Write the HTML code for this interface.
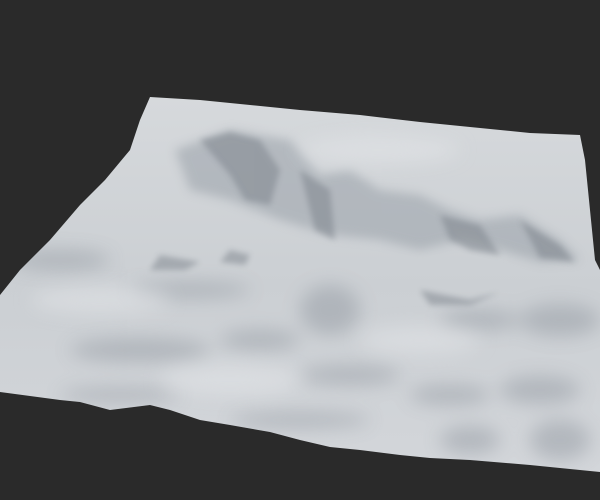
<!DOCTYPE html>
<html><head><style>
html,body{margin:0;padding:0;background:#2a2a2a;width:600px;height:500px;overflow:hidden}
</style></head><body>
<svg width="600" height="500" viewBox="0 0 600 500" xmlns="http://www.w3.org/2000/svg">
<defs>
<linearGradient id="g" x1="0" y1="0" x2="0" y2="1">
<stop offset="0" stop-color="#d6d9dc"/>
<stop offset="0.5" stop-color="#cbcfd3"/>
<stop offset="1" stop-color="#d3d6da"/>
</linearGradient>
<filter id="b4"><feGaussianBlur stdDeviation="5"/></filter>
<filter id="b8"><feGaussianBlur stdDeviation="9"/></filter>
<filter id="b2"><feGaussianBlur stdDeviation="3"/></filter>
<clipPath id="c"><path id="shape" d="M150,97 L200,100 L240,104 L300,110 L360,115 L420,122 L470,127 L530,133 L580,135 L585,160 L590,210 L595,260 L600,270 L600,472 L560,468 L530,465 L470,460 L430,458 L400,455 L360,450 L330,447 L300,440 L270,432 L230,425 L200,420 L170,410 L150,405 L110,410 L80,402 L60,400 L30,396 L0,392 L0,295 L20,270 L50,240 L80,205 L105,180 L130,150 L140,120 Z"/></clipPath>
</defs>
<rect width="600" height="500" fill="#2a2a2a"/>
<use href="#shape" fill="url(#g)"/>
<g clip-path="url(#c)">
<g filter="url(#b4)" fill="#9aa1a9" opacity="0.55">
<path d="M175,150 L230,130 L290,140 L320,175 L350,170 L380,190 L420,195 L450,210 L480,220 L520,215 L560,240 L580,260 L540,262 L500,250 L460,240 L420,250 L380,240 L330,235 L280,220 L230,200 L190,190 Z"/>
</g>
<g filter="url(#b2)" fill="#747b84" opacity="0.45">
<path d="M200,140 L230,132 L260,140 L280,170 L270,205 L245,200 L230,175 Z"/>
<path d="M300,170 L330,190 L335,240 L315,230 Z"/>
<path d="M440,215 L480,225 L500,255 L470,250 L450,240 Z"/>
<path d="M520,220 L560,245 L575,262 L540,258 Z"/>
<path d="M230,250 L250,255 L245,265 L220,262 Z"/>
<path d="M420,290 L470,300 L500,292 L470,305 L430,305 Z"/>
<path d="M160,255 L200,262 L185,270 L150,270 Z"/>
</g>
<g filter="url(#b8)" fill="#868d96" opacity="0.4">
<ellipse cx="60" cy="260" rx="50" ry="10"/>
<ellipse cx="140" cy="350" rx="70" ry="12"/>
<ellipse cx="330" cy="310" rx="30" ry="25"/>
<ellipse cx="480" cy="320" rx="40" ry="10"/>
<ellipse cx="560" cy="320" rx="40" ry="16"/>
<ellipse cx="260" cy="340" rx="40" ry="10"/>
<ellipse cx="350" cy="375" rx="50" ry="10"/>
<ellipse cx="450" cy="395" rx="40" ry="10"/>
<ellipse cx="540" cy="390" rx="40" ry="14"/>
<ellipse cx="120" cy="395" rx="60" ry="7"/>
<ellipse cx="300" cy="420" rx="70" ry="8"/>
<ellipse cx="470" cy="440" rx="30" ry="14"/>
<ellipse cx="560" cy="440" rx="30" ry="20"/>
<ellipse cx="190" cy="290" rx="60" ry="8"/>
</g>
<g filter="url(#b8)" fill="#e4e6e9" opacity="0.5">
<ellipse cx="100" cy="300" rx="70" ry="14"/>
<ellipse cx="230" cy="380" rx="70" ry="16"/>
<ellipse cx="420" cy="340" rx="60" ry="14"/>
<ellipse cx="380" cy="150" rx="80" ry="14"/>
</g>
</g>
</svg>
</body></html>
